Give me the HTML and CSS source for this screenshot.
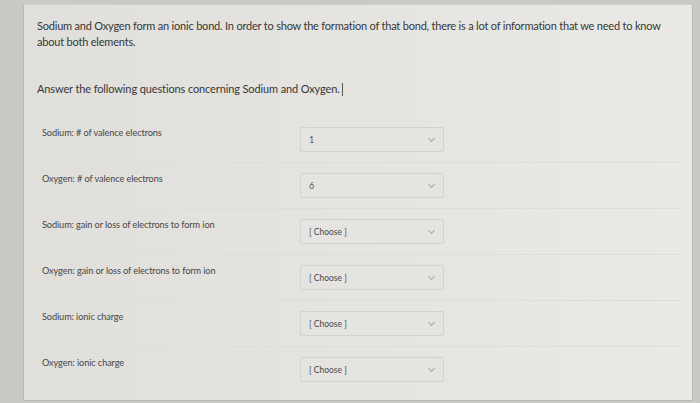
FILE: index.html
```html
<!DOCTYPE html>
<html lang="en">
<head>
    <meta charset="UTF-8">
    <meta name="viewport" content="width=device-width, initial-scale=1.0">
    <title>Quiz Question</title>
    <link rel="stylesheet" href="styles.css">
</head>
<body>
    <div class="panel">
        <div class="question-text">
            <p class="intro">Sodium and Oxygen form an ionic bond. In order to show the formation of that bond, there is a lot of information that we need to know about both elements.</p>
            <p class="prompt">Answer the following questions concerning Sodium and Oxygen.<span class="caret"></span></p>
        </div>

        <div class="answers">
            <div class="answer-row">
                <div class="answer-label">Sodium: # of valence electrons</div>
                <div class="select-box"><span class="value">1</span><span class="chevron"></span></div>
            </div>
            <div class="answer-row">
                <div class="answer-label">Oxygen: # of valence electrons</div>
                <div class="select-box"><span class="value">6</span><span class="chevron"></span></div>
            </div>
            <div class="answer-row">
                <div class="answer-label">Sodium: gain or loss of electrons to form ion</div>
                <div class="select-box"><span class="value choose">[ Choose ]</span><span class="chevron"></span></div>
            </div>
            <div class="answer-row">
                <div class="answer-label">Oxygen: gain or loss of electrons to form ion</div>
                <div class="select-box"><span class="value choose">[ Choose ]</span><span class="chevron"></span></div>
            </div>
            <div class="answer-row">
                <div class="answer-label">Sodium: ionic charge</div>
                <div class="select-box"><span class="value choose">[ Choose ]</span><span class="chevron"></span></div>
            </div>
            <div class="answer-row last">
                <div class="answer-label">Oxygen: ionic charge</div>
                <div class="select-box"><span class="value choose">[ Choose ]</span><span class="chevron"></span></div>
            </div>
        </div>
    </div>
</body>
</html>
```

FILE: styles.css
```css
html, body {
    height: 100%;
}

body {
    margin: 0;
    background-color: #c9c9c6;
    font-family: Lato, "Open Sans", Arial, sans-serif;
    color: #373737;
    overflow: hidden;
}

.panel {
    box-sizing: border-box;
    height: 397px;
    margin: 4px 7px 0 23px;
    border: 1px solid #b9b9b6;
    border-top-color: #cfcfcc;
    background: linear-gradient(90deg, #e0dfdb 0%, #e5e4e0 50%, #eae9e5 100%);
}

.question-text {
    padding: 13px 30px 0 13px;
}

.intro {
    margin: 0;
    font-size: 11px;
    line-height: 16px;
    letter-spacing: -0.2px;
}

.prompt {
    margin: 31px 0 0;
    font-size: 11px;
    line-height: 16px;
    letter-spacing: -0.12px;
}

.caret {
    display: inline-block;
    width: 0;
    height: 13px;
    margin-left: 2px;
    border-left: 1px solid #555;
    vertical-align: -3px;
}

.answers {
    margin: 20px 12px 0 13px;
}

.answer-row {
    display: flex;
    align-items: flex-start;
    padding: 10px 0 10px 5px;
    border-bottom: 1px solid #dedddA;
}

.answer-row.last {
    border-bottom: none;
}

.answer-label {
    width: 258px;
    font-size: 9.2px;
    line-height: 12px;
    letter-spacing: -0.1px;
    color: #474747;
}

.select-box {
    box-sizing: border-box;
    display: flex;
    align-items: center;
    justify-content: space-between;
    width: 144px;
    height: 25px;
    padding: 0 9px 0 8px;
    border: 1px solid #d3d2ce;
    border-radius: 2px;
    background-color: #e5e4e0;
}

.value {
    font-size: 9px;
    color: #5a5a5a;
}

.value.choose {
    font-size: 8.5px;
    color: #4a4a4a;
}

.chevron {
    width: 4px;
    height: 4px;
    margin-top: -3px;
    border-right: 1px solid #a9a9a9;
    border-bottom: 1px solid #a9a9a9;
    transform: rotate(45deg);
}
```
